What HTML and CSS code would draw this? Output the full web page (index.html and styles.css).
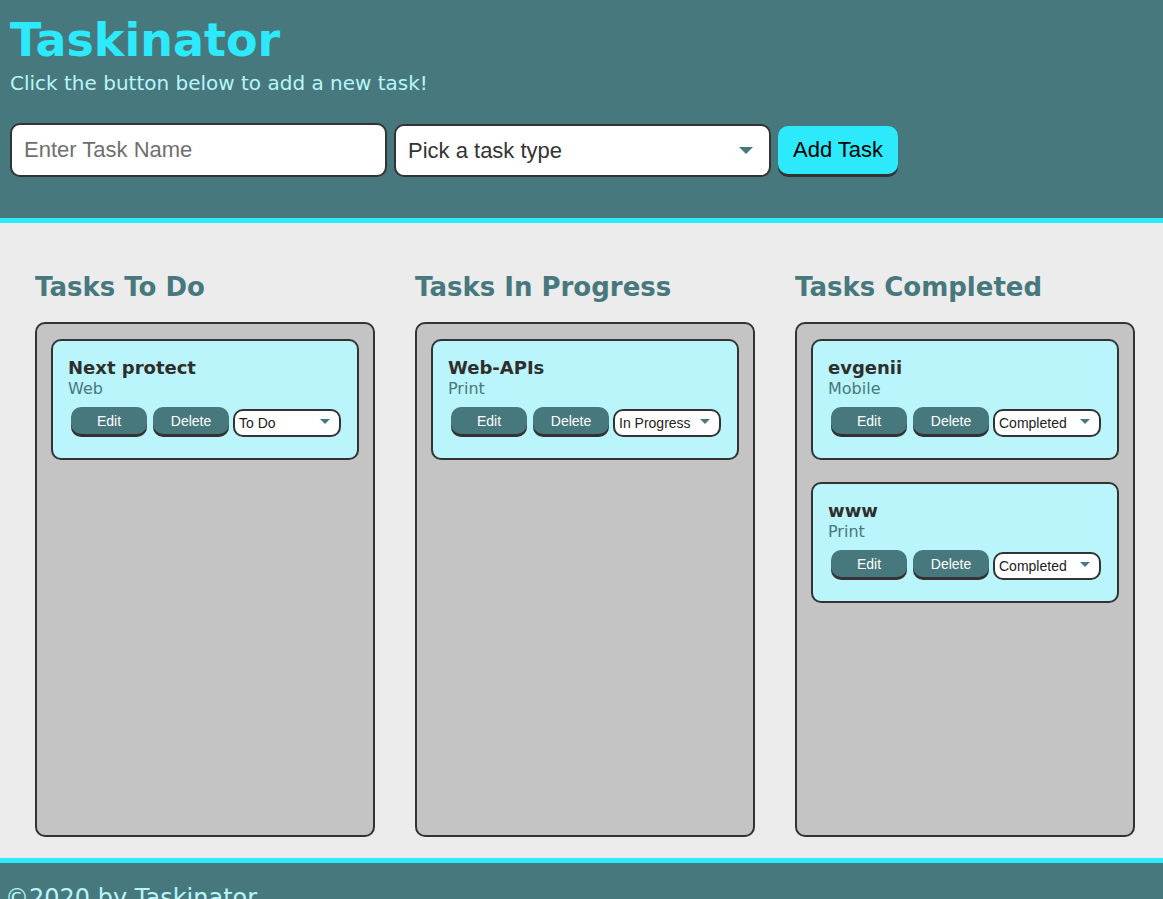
FILE: index.html
```html
<!DOCTYPE html>
<html>
<head>
  <title>Taskinator</title>
  <link rel="stylesheet" href="styles.css">
</head>
<body>

<header class="header">
  <h1 class="page-title">Taskinator</h1>
  <p class="page-sub">Click the button below to add a new task!</p>
  <form class="task-form">
    <input type="text" class="text-input" placeholder="Enter Task Name" />
    <div class="select-wrap big">
      <select class="select-input">
        <option>Pick a task type</option>
        <option>Web</option>
        <option>Mobile</option>
        <option>Print</option>
      </select>
    </div>
    <button type="button" class="btn-add">Add Task</button>
  </form>
</header>

<main class="page-content">
  <section class="task-col">
    <h2 class="col-title">Tasks To Do</h2>
    <ul class="task-list">
      <li class="task-item">
        <h3 class="task-name">Next protect</h3>
        <span class="task-type">Web</span>
        <div class="task-actions">
          <button class="btn">Edit</button>
          <button class="btn">Delete</button>
          <div class="select-wrap small">
            <select class="select-status">
              <option>To Do</option>
              <option>In Progress</option>
              <option>Completed</option>
            </select>
          </div>
        </div>
      </li>
    </ul>
  </section>

  <section class="task-col">
    <h2 class="col-title">Tasks In Progress</h2>
    <ul class="task-list">
      <li class="task-item">
        <h3 class="task-name">Web-APIs</h3>
        <span class="task-type">Print</span>
        <div class="task-actions">
          <button class="btn">Edit</button>
          <button class="btn">Delete</button>
          <div class="select-wrap small">
            <select class="select-status">
              <option>In Progress</option>
              <option>To Do</option>
              <option>Completed</option>
            </select>
          </div>
        </div>
      </li>
    </ul>
  </section>

  <section class="task-col">
    <h2 class="col-title">Tasks Completed</h2>
    <ul class="task-list">
      <li class="task-item">
        <h3 class="task-name">evgenii</h3>
        <span class="task-type">Mobile</span>
        <div class="task-actions">
          <button class="btn">Edit</button>
          <button class="btn">Delete</button>
          <div class="select-wrap small">
            <select class="select-status">
              <option>Completed</option>
              <option>To Do</option>
              <option>In Progress</option>
            </select>
          </div>
        </div>
      </li>
      <li class="task-item">
        <h3 class="task-name">www</h3>
        <span class="task-type">Print</span>
        <div class="task-actions">
          <button class="btn">Edit</button>
          <button class="btn">Delete</button>
          <div class="select-wrap small">
            <select class="select-status">
              <option>Completed</option>
              <option>To Do</option>
              <option>In Progress</option>
            </select>
          </div>
        </div>
      </li>
    </ul>
  </section>
</main>

<footer class="footer">
  <p>&copy;2020 by Taskinator</p>
</footer>

</body>
</html>
```

FILE: styles.css
```css
* {
  box-sizing: border-box;
}

body {
  margin: 0;
  font-family: "DejaVu Sans", Verdana, sans-serif;
  background: #ececec;
  color: #2e2e2e;
}

.header {
  background: #47787d;
  border-bottom: 5px solid #2ceafc;
  padding: 17px 10px 0;
  height: 223px;
}

.page-title {
  margin: 0;
  font-size: 46px;
  line-height: 1;
  color: #2ceafc;
}

.page-sub {
  margin: 8px 0 0;
  font-size: 20px;
  color: #b8f5fb;
}

.task-form {
  display: flex;
  align-items: flex-end;
  gap: 7px;
  margin-top: 28px;
}

.text-input {
  width: 377px;
  height: 54px;
  padding: 0 12px;
  font-family: "Liberation Sans", Arial, sans-serif;
  font-size: 22px;
  border: 2px solid #333;
  border-radius: 10px;
  background: #fff;
  outline: none;
}

.text-input::placeholder {
  color: #6f6f6f;
}

.select-wrap {
  position: relative;
}

.select-wrap::after {
  content: "";
  position: absolute;
  top: 50%;
  border-left: 7px solid transparent;
  border-right: 7px solid transparent;
  border-top: 7px solid #47787d;
  pointer-events: none;
}

.select-wrap.big::after {
  right: 18px;
  margin-top: -4px;
}

.select-wrap.small::after {
  right: 11px;
  margin-top: -3px;
  border-left-width: 5px;
  border-right-width: 5px;
  border-top-width: 5px;
}

.select-input {
  appearance: none;
  -webkit-appearance: none;
  width: 377px;
  height: 53px;
  padding: 0 12px;
  font-family: "Liberation Sans", Arial, sans-serif;
  font-size: 22px;
  color: #333;
  border: 2px solid #333;
  border-radius: 10px;
  background: #fff;
}

.btn-add {
  height: 48px;
  padding: 0 15px;
  font-family: "Liberation Sans", Arial, sans-serif;
  font-size: 22px;
  color: #000;
  background: #2ceafc;
  border: none;
  border-radius: 10px;
  box-shadow: 0 3px 0 #333;
  margin-bottom: 3px;
}

.page-content {
  display: flex;
  gap: 40px;
  padding: 48px 28px 21px 35px;
}

.task-col {
  flex: 0 0 340px;
  min-width: 0;
}

.col-title {
  margin: 0 0 19px;
  font-size: 26px;
  line-height: 32px;
  color: #47787d;
}

.task-list {
  list-style: none;
  margin: 0;
  padding: 15px 14px 0;
  height: 515px;
  background: #c4c4c4;
  border: 2px solid #333;
  border-radius: 10px;
}

.task-item {
  background: #baf5fb;
  border: 2px solid #333;
  border-radius: 10px;
  padding: 17px 10px 21px 15px;
  margin-bottom: 22px;
}

.task-name {
  margin: 0;
  font-size: 18px;
  line-height: 20px;
  color: #2e2e2e;
}

.task-type {
  display: block;
  font-size: 16px;
  line-height: 22px;
  color: #47787d;
}

.task-actions {
  display: flex;
  align-items: center;
  gap: 4px;
  margin-top: 6px;
  padding-left: 3px;
}

.btn {
  width: 76px;
  height: 27px;
  font-family: "Liberation Sans", Arial, sans-serif;
  font-size: 14px;
  color: #fff;
  background: #47787d;
  border: none;
  border-radius: 10px;
  box-shadow: 0 3px 0 #333;
  margin-bottom: 2px;
}

.btn:first-child {
  margin-right: 2px;
}

.select-status {
  appearance: none;
  -webkit-appearance: none;
  width: 108px;
  height: 28px;
  padding: 0 4px;
  font-family: "Liberation Sans", Arial, sans-serif;
  font-size: 14px;
  color: #222;
  background: #fff;
  border: 2px solid #333;
  border-radius: 10px;
  margin-top: 3px;
}

.footer {
  background: #47787d;
  border-top: 5px solid #2ceafc;
  padding: 0 5px;
  height: 60px;
}

.footer p {
  margin: 0;
  padding-top: 21px;
  font-size: 24px;
  color: #b8f5fb;
}
```
